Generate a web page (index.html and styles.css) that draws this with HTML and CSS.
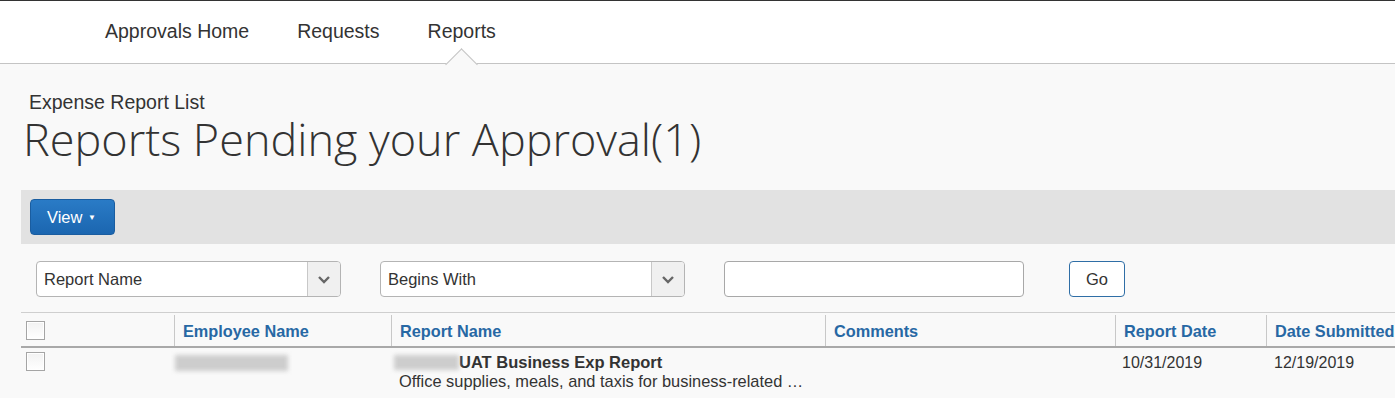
FILE: index.html
```html
<!DOCTYPE html>
<html>
<head>
<meta charset="utf-8">
<link rel="stylesheet" href="styles.css">
</head>
<body>
<div class="topline"></div>
<nav class="nav">
  <a class="nav-item">Approvals Home</a>
  <a class="nav-item">Requests</a>
  <a class="nav-item active">Reports<span class="caret"></span></a>
</nav>
<main class="content">
  <div class="subtitle">Expense Report List</div>
  <h1 class="title">Reports Pending your Approval(1)</h1>
  <div class="toolbar">
    <button class="btn-view">View <span class="tri">&#9660;</span></button>
  </div>
  <div class="filters">
    <div class="select w305"><span class="sel-text">Report Name</span><span class="sel-arrow"><svg width="14" height="9" viewBox="0 0 14 9"><path d="M2 2 L7 7 L12 2" fill="none" stroke="#666" stroke-width="2.4"/></svg></span></div>
    <div class="select w305"><span class="sel-text">Begins With</span><span class="sel-arrow"><svg width="14" height="9" viewBox="0 0 14 9"><path d="M2 2 L7 7 L12 2" fill="none" stroke="#666" stroke-width="2.4"/></svg></span></div>
    <div class="textbox"></div>
    <button class="btn-go">Go</button>
  </div>
  <div class="table">
    <div class="row head">
      <div class="cell c1"><span class="chk"></span></div>
      <div class="cell c2 sep">Employee Name</div>
      <div class="cell c3 sep">Report Name</div>
      <div class="cell c4 sep">Comments</div>
      <div class="cell c5 sep">Report Date</div>
      <div class="cell c6 sep">Date Submitted</div>
    </div>
    <div class="row body">
      <div class="cell c1"><span class="chk"></span></div>
      <div class="cell c2"><span class="blur blur-emp"></span></div>
      <div class="cell c3">
        <div class="rname"><span class="blur blur-rep"></span>UAT Business Exp Report</div>
        <div class="rdesc">Office supplies, meals, and taxis for business-related …</div>
      </div>
      <div class="cell c4"></div>
      <div class="cell c5 date">10/31/2019</div>
      <div class="cell c6 date">12/19/2019</div>
    </div>
  </div>
</main>
</body>
</html>
```

FILE: styles.css
```css
html, body {
  margin: 0;
  padding: 0;
  background: #f9f9f9;
  font-family: "Liberation Sans", Arial, sans-serif;
  color: #333;
  overflow: hidden;
}
.topline {
  height: 1px;
  background: #333;
}
.nav {
  height: 63px;
  box-sizing: border-box;
  background: #fff;
  border-bottom: 1px solid #c4c4c4;
  display: flex;
  align-items: stretch;
  padding-left: 105px;
  gap: 48px;
}
.nav-item {
  font-size: 19.5px;
  color: #333;
  position: relative;
  display: flex;
  align-items: center;
  padding-bottom: 2px;
  box-sizing: border-box;
}
.caret {
  position: absolute;
  left: 50%;
  bottom: -13px;
  width: 22px;
  height: 22px;
  margin-left: -12px;
  background: #f9f9f9;
  border-left: 1px solid #c4c4c4;
  border-top: 1px solid #c4c4c4;
  transform: rotate(45deg);
}
.content {
  margin-left: 21px;
}
.subtitle {
  font-size: 19.5px;
  padding-left: 8px;
  padding-top: 28px;
  line-height: 20px;
}
.title {
  margin: 3px 0 0 0;
  font-family: "Open Sans", sans-serif;
  font-weight: 300;
  font-size: 45px;
  line-height: 48px;
  color: #333;
  padding-left: 2px;
}
.toolbar {
  margin-top: 27px;
  height: 54px;
  background: #e2e2e2;
  display: flex;
  align-items: center;
  padding-left: 9px;
  box-sizing: border-box;
}
.btn-view {
  width: 85px;
  height: 36px;
  border: 1px solid #1a5da0;
  border-radius: 4px;
  background: linear-gradient(#2a7bc6, #1b66b0);
  color: #fff;
  font-family: "Liberation Sans", Arial, sans-serif;
  font-size: 16.5px;
  padding: 0 2px 0 0;
}
.btn-view .tri {
  font-size: 8px;
  vertical-align: 3px;
  margin-left: 1px;
}
.filters {
  display: flex;
  align-items: center;
  padding: 17px 0 15px 15px;
}
.select {
  height: 36px;
  box-sizing: border-box;
  border: 1px solid #b4b4b4;
  border-radius: 4px;
  background: #fff;
  display: flex;
  align-items: center;
  margin-right: 39px;
}
.w305 { width: 305px; }
.sel-text {
  flex: 1;
  padding-left: 7px;
  font-size: 16.5px;
  color: #333;
}
.sel-arrow {
  width: 32px;
  height: 100%;
  border-left: 1px solid #c8c8c8;
  background: #f0f0f0;
  border-radius: 0 3px 3px 0;
  display: flex;
  align-items: center;
  justify-content: center;
}
.textbox {
  width: 300px;
  height: 36px;
  box-sizing: border-box;
  border: 1px solid #a8a8a8;
  border-radius: 4px;
  background: #fff;
  margin-right: 45px;
}
.btn-go {
  width: 56px;
  height: 36px;
  box-sizing: border-box;
  border: 1px solid #2f6ea6;
  border-radius: 4px;
  background: #fff;
  color: #333;
  font-family: "Liberation Sans", Arial, sans-serif;
  font-size: 16.5px;
  padding: 0;
}
.table {
  border-top: 1px solid #cfcfcf;
}
.row {
  display: flex;
}
.row.head {
  height: 35px;
  border-bottom: 2px solid #a9a9a9;
  box-sizing: border-box;
}
.cell {
  box-sizing: border-box;
  flex: none;
}
.head .cell {
  font-weight: bold;
  font-size: 16.3px;
  color: #2768a4;
  padding: 9px 0 0 8px;
}
.head .sep {
  border-left: 1px solid #c8c8c8;
  margin-top: 2px;
  padding-top: 7px;
}
.c1 { width: 153px; padding-left: 5px !important; }
.c2 { width: 217px; }
.c3 { width: 434px; }
.c4 { width: 290px; }
.c5 { width: 151px; }
.c6 { width: 160px; }
.head .c1 { padding-top: 8px; }
.chk {
  display: block;
  width: 19px;
  height: 19px;
  box-sizing: border-box;
  border: 1px solid #a5a5a5;
  background: linear-gradient(#f2f2f2, #fff);
  box-shadow: inset 0 0 0 1px #fff;
}
.row.body .cell {
  padding-top: 5px;
}
.row.body .c1 { padding-top: 4px; }
.blur {
  display: inline-block;
  background: #cdcdcd;
  filter: blur(2px);
}
.blur-emp {
  width: 113px;
  height: 16px;
  margin-top: 2px;
  margin-left: 1px;
}
.row.body .c2 { padding-left: 0; }
.row.body .c3 { padding-left: 3px; }
.rname {
  font-weight: bold;
  font-size: 16.5px;
  line-height: 19px;
  color: #333;
  display: flex;
  align-items: center;
}
.blur-rep {
  width: 65px;
  height: 15px;
}
.rdesc {
  font-size: 16.4px;
  line-height: 19px;
  padding-left: 5px;
  color: #333;
}
.date {
  font-size: 16px;
  line-height: 19px;
  padding-left: 7px;
}
.row.body .c6 { padding-left: 8px; }
```
